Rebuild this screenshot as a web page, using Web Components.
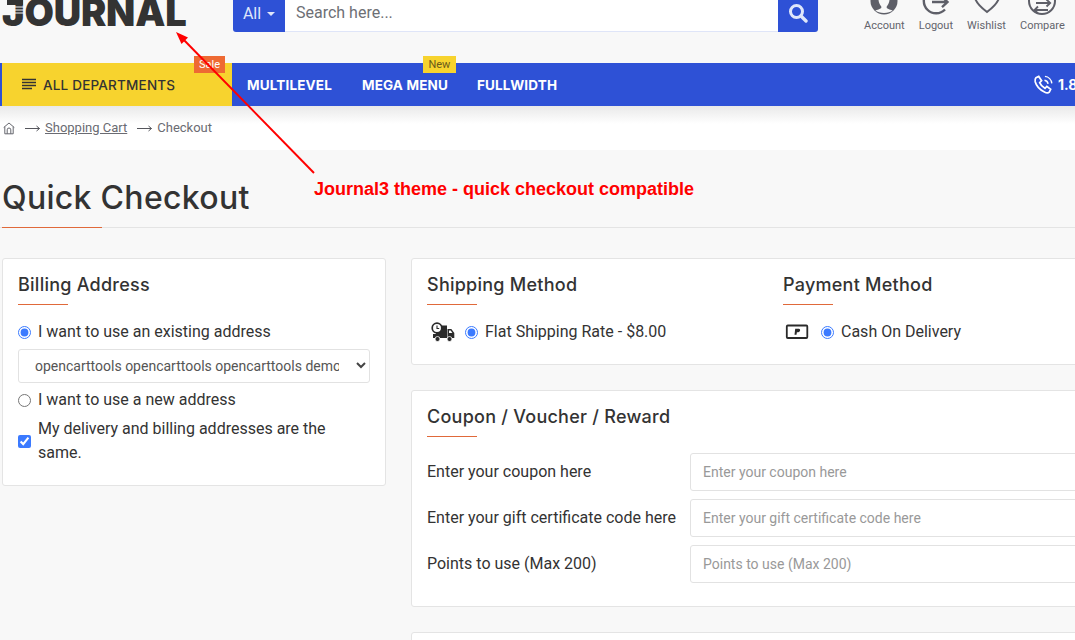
<!DOCTYPE html>
<html><head><meta charset="utf-8">
<style>
html,body{margin:0;padding:0;height:640px;width:1075px;overflow:hidden;background:#f8f8f8}
body{font:16px/24px Roboto,sans-serif;color:#333}
</style></head><body>
<x-page></x-page>

<template id="t-page">
<style>
:host{display:block;width:1200px;position:relative;height:640px;overflow:hidden}
.cols{display:grid;grid-template-columns:384px 746px;gap:25px;padding:30px 0 0 2px;align-items:start}
.right{display:flex;flex-direction:column;gap:25px}
.two{display:grid;grid-template-columns:356px 1fr}
.opt{display:flex;align-items:center;height:24px;margin-top:15px}
.opt svg{flex:none}
.note{position:absolute;z-index:4;left:314px;top:178px;font:bold 18px/22px "Liberation Sans",sans-serif;color:#f00;white-space:nowrap}
.arrow{position:absolute;z-index:4;left:0;top:0;pointer-events:none}
</style>
<x-header></x-header>
<x-nav></x-nav>
<x-crumbs></x-crumbs>
<x-title>Quick Checkout</x-title>
<div class="cols">
  <x-card heading="Billing Address">
    <x-choice type="radio" name="a" checked top="15">I want to use an existing address</x-choice>
    <x-select>opencarttools opencarttools opencarttools demo demo, Texas, United States</x-select>
    <x-choice type="radio" name="a" top="5">I want to use a new address</x-choice>
    <x-choice type="checkbox" checked top="5">My delivery and billing addresses are the same.</x-choice>
  </x-card>
  <div class="right">
    <x-card>
      <div class="two">
        <div><x-heading>Shipping Method</x-heading>
          <div class="opt">
            <svg width="24" height="20" viewBox="0 0 24 20" style="margin:0 10px 0 4px"><rect x="5" y="3.500" width="11" height="12.500" fill="#2a2a2a"/><rect x="2" y="12" width="14" height="4" fill="#2a2a2a"/><circle cx="6" cy="6" r="4.800" fill="#fff" stroke="#2a2a2a" stroke-width="1.700"/><path d="M6 3.500V6.500h2.200" fill="none" stroke="#2a2a2a" stroke-width="1.100"/><path d="M16.500 7h3.800l3 4v5h-6.800z" fill="#2a2a2a"/><path d="M18 8.500h1.700l1.700 2.500H18z" fill="#fff"/><circle cx="6.500" cy="17" r="2.500" fill="#2a2a2a" stroke="#fff" stroke-width=".8"/><circle cx="18.500" cy="17" r="2.500" fill="#2a2a2a" stroke="#fff" stroke-width=".8"/></svg>
            <x-choice type="radio" name="s" checked>Flat Shipping Rate - $8.00</x-choice>
          </div>
        </div>
        <div><x-heading>Payment Method</x-heading>
          <div class="opt">
            <svg width="24" height="16" viewBox="0 0 24 16" style="margin:0 12px 0 2px"><rect x="1.800" y="1.500" width="20.500" height="12.500" rx="1" fill="#fff" stroke="#2a2a2a" stroke-width="1.800"/><path d="M10.200 4.800h3.700c1.700 0 1.800 3.300-.7 3.400h-1.300l-.4 2.500h-2z" fill="#2a2a2a"/></svg>
            <x-choice type="radio" name="p" checked>Cash On Delivery</x-choice>
          </div>
        </div>
      </div>
    </x-card>
    <x-card heading="Coupon / Voucher / Reward" style="padding-bottom:15px">
      <div style="height:16px"></div>
      <x-field>Enter your coupon here</x-field>
      <x-field>Enter your gift certificate code here</x-field>
      <x-field>Points to use (Max 200)</x-field>
    </x-card>
    <x-card style="height:100px"></x-card>
  </div>
</div>
<svg class="arrow" width="400" height="200" viewBox="0 0 400 200"><path d="M314 173L181 37" stroke="#f00" stroke-width="2" fill="none"/><path d="M176 32L188 37.500 181.500 44z" fill="#f00"/></svg>
<div class="note">Journal3 theme - quick checkout compatible</div>
</template>

<template id="t-header">
<style>
:host{display:flex;align-items:flex-end;height:32px;padding-bottom:31px;overflow:hidden}
.logo{width:233px;flex:none;box-sizing:border-box;padding-left:2px;height:40px;position:relative;font:900 38px/41px Inter,sans-serif;color:#333;letter-spacing:-.2px;white-space:nowrap}
.logo svg{position:absolute;left:6px;top:8px}
.search{display:flex;width:585px;height:38px;flex:none;border-radius:0 0 3px 3px;overflow:hidden}
.all{background:#2e51d6;color:#dfe6fa;width:52px;box-sizing:border-box;display:flex;align-items:center;justify-content:center;gap:6px;font:16px Roboto,sans-serif}
.all i{width:0;height:0;border:4px solid transparent;border-top-color:#dfe6fa;border-bottom:0;margin-top:2px}
.q{flex:1;background:#fff;color:#6d6f75;font:16px/38px Roboto,sans-serif;padding-left:11px;box-shadow:inset 0 -1px 0 #dfe5f8}
.btn{width:40px;background:#2e51d6;display:flex;align-items:center;justify-content:center}
.tools{display:flex;gap:14px;margin-left:46px;font:11px/14px Roboto,sans-serif;color:#63646c}
.tool{display:flex;flex-direction:column;align-items:center;height:32px;justify-content:flex-end}
.tool svg{display:block;margin-bottom:4px;flex:none}
.tool span{margin-bottom:-1px;height:14px;flex:none}
</style>
<div class="logo">JOURNAL<svg width="18" height="16" viewBox="0 0 18 16"><rect x="1" y="0" width="16" height="5" fill="#333"/><path d="M7 7h11M7 10h11M7 13h11" stroke="#f8f8f8" stroke-width="1"/></svg></div>
<div class="search">
  <div class="all"><span>All</span><i></i></div>
  <div class="q"><span>Search here...</span></div>
  <div class="btn"><svg width="20" height="20" viewBox="0 0 20 20"><circle cx="8.500" cy="8.500" r="6" fill="none" stroke="#dfe6fa" stroke-width="3"/><path d="M13 13l5 5" stroke="#dfe6fa" stroke-width="3.400" stroke-linecap="round"/></svg></div>
</div>
<div class="tools">
  <div class="tool"><svg width="28" height="28" viewBox="0 0 28 28"><circle cx="14" cy="14" r="13.500" fill="#5e5f68"/><path d="M14 6c4 0 6 3 5.500 7-.3 3-1.500 5-2.800 6.500V21c1.500 1.300 4 1.800 6 2.500-2 1.500-5 2.500-8.700 2.500s-6.700-1-8.700-2.500c2-.7 4.500-1.200 6-2.500v-1.500c-1.300-1.500-2.500-3.500-2.800-6.500C8 9 10 6 14 6z" fill="#f8f8f8"/></svg><span>Account</span></div>
  <div class="tool"><svg width="28" height="28" viewBox="0 0 28 28" fill="none" stroke="#5e5f68"><path d="M23 22.500A12.300 12.300 0 1 1 23 5.500" stroke-width="2.400"/><path d="M10 15h15.500M20 9.800l5.500 5.200-5.500 5.200" stroke-width="2.400"/></svg><span>Logout</span></div>
  <div class="tool" style="min-width:39px"><svg width="28" height="28" viewBox="0 0 28 28" style="margin-bottom:5px"><path d="M14 26C8 21.500 1.500 16 1.500 9 1.500 4.500 5 1.500 8.500 1.500c2.300 0 4.200 1 5.500 3 1.300-2 3.200-3 5.500-3 3.500 0 7 3 7 7.500 0 7-6.500 12.500-12.500 17z" fill="none" stroke="#5e5f68" stroke-width="2"/></svg><span>Wishlist</span></div>
  <div class="tool"><svg width="28" height="28" viewBox="0 0 28 28" fill="none" stroke="#5e5f68"><circle cx="14" cy="14" r="13" stroke-width="2"/><path d="M8 16h14M18.500 12.500l3.700 3.500-3.700 3.500M20 23H6.500M10 19.500l-3.500 3.500 3.500 3.500" stroke-width="1.800"/></svg><span>Compare</span></div>
</div>
</template>

<template id="t-nav">
<style>
:host{display:flex;height:43px;background:#2e51d6;padding-left:2px;align-items:stretch;white-space:nowrap;position:relative;z-index:2}
.dept{width:230px;flex:none;box-sizing:border-box;background:#f7d32e;display:flex;align-items:center;padding-left:19px;gap:6px;font:500 13.500px Inter,sans-serif;color:#333;position:relative;letter-spacing:.2px}
.items{display:flex;align-items:center;padding-left:15px;color:#fff;font:700 13.500px Inter,sans-serif;letter-spacing:.15px}
.item{position:relative;margin-right:30px}
.item:nth-child(2){margin-right:29px}
.badge{position:absolute;height:17px;font:11px/17px Roboto,sans-serif;text-align:center;letter-spacing:0}
.sale{top:-7px;right:7px;width:31px;background:#ee6a33;color:#fff}
.new{left:61px;width:33px;background:#f7d32e;color:#6a5a1a;top:-21px}
.phone{position:absolute;left:1033px;top:0;height:43px;display:flex;align-items:center;gap:4px;color:#fff;font:700 14px Inter,sans-serif}
</style>
<div class="dept"><svg width="16" height="14" viewBox="0 0 16 14" stroke="#333" stroke-width="1.500"><path d="M1 1.500h14M1 4.500h14M1 7.500h14M1 10.500h10"/></svg>ALL DEPARTMENTS<div class="badge sale">Sale</div></div>
<div class="items">
  <div class="item">MULTILEVEL</div>
  <div class="item">MEGA MENU<div class="badge new">New</div></div>
  <div class="item">FULLWIDTH</div>
</div>
<div class="phone"><svg width="21" height="22" viewBox="0 0 22 22" fill="none" stroke="#fff" stroke-width="1.800"><path d="M3 3.500l3-1.500 3 4.500-2 2c1 2.500 3 4.500 5.500 6l2-2 4 3-1.500 3c-1 1-3 1-5-.2C7.500 16 3.500 12 2.300 7.500 2 6 2.200 4.500 3 3.500z"/><path d="M12 6c2 .3 3.500 1.800 3.800 3.800M12.500 2c3.800.4 6.800 3.500 7.200 7.300" stroke-width="1.500"/></svg><span>1.800.555.8888</span></div>
</template>

<template id="t-crumbs">
<style>
:host{display:flex;align-items:center;height:44px;background:linear-gradient(#e9e9e9,#fff 18px);padding-left:3px;font:13px/16px Roboto,sans-serif;color:#6a6b72}
a{color:inherit;text-decoration:underline}
svg{display:block}
.ar{margin:0 5px 0 10px}
.row{display:flex;align-items:center}
</style>
<div class="row">
<svg width="12" height="13" viewBox="0 0 12 13" fill="none" stroke="#66676e" stroke-width="1"><path d="M.7 5.500L6 1l5.300 4.500M1.800 4.800v7h8.400v-7M4.200 11.800V7.800a1.800 1.800 0 0 1 3.600 0v4"/></svg>
<svg class="ar" width="15" height="7" viewBox="0 0 15 7" fill="none" stroke="#55565c"><path d="M0 3.500h14.500M11.500 1l3 2.500-3 2.500"/></svg>
<a>Shopping Cart</a>
<svg class="ar" width="15" height="7" viewBox="0 0 15 7" fill="none" stroke="#55565c"><path d="M0 3.500h14.500M11.500 1l3 2.500-3 2.500"/></svg>
<span>Checkout</span>
</div>
</template>

<template id="t-title">
<style>
:host{display:block;height:78px;box-sizing:border-box;border-bottom:1px solid #e4e4e4;position:relative;padding:29px 0 0 2px;font:500 32px/38px Inter,sans-serif;color:#333;letter-spacing:.3px}
:host::after{content:"";position:absolute;left:2px;bottom:-1px;width:100px;height:1px;background:#e0693a}
</style><slot></slot>
</template>

<template id="t-card">
<style>
:host{display:block;background:#fff;border:1px solid #e4e4e4;border-radius:3px;padding:14px 15px 20px;box-sizing:border-box}
</style>
<slot name="h"></slot><slot></slot>
</template>

<template id="t-heading">
<style>
:host{display:block;font:500 18px/24px Inter,sans-serif;color:#333;padding-bottom:8px;position:relative;height:24px;letter-spacing:.25px}
:host::after{content:"";position:absolute;left:0;bottom:0;width:50px;height:1px;background:#e0693a}
</style><slot></slot>
</template>

<template id="t-choice">
<style>
:host{display:block}
label{display:flex;align-items:center;gap:7px;line-height:24px;color:#333}
input{margin:0;flex:none;width:13px;height:13px;accent-color:#3b7aff}
</style>
<label><input><span><slot></slot></span></label>
</template>

<template id="t-select">
<style>
:host{display:block;margin-top:5px;position:relative}
select{display:block;appearance:none;width:100%;height:34px;box-sizing:border-box;border:1px solid #e2e2e2;border-radius:3px;background:#fff;color:#555;font:14px Roboto,sans-serif;padding:0 30px 0 16px;outline:0}
svg{position:absolute;right:4px;top:13px;pointer-events:none}
</style>
<select><option></option></select>
<svg width="10" height="7" viewBox="0 0 10 7" fill="none" stroke="#444" stroke-width="2"><path d="M1 1l4 4 4-4"/></svg>
</template>

<template id="t-field">
<style>
:host{display:grid;grid-template-columns:263px 1fr;align-items:center;margin-bottom:8px}
input{height:38px;box-sizing:border-box;width:100%;border:1px solid #e2e2e2;border-radius:3px;background:#fff;font:14px Roboto,sans-serif;padding:0 12px;outline:0}
input::placeholder{color:#999;opacity:1}
span{color:#333}
</style>
<span><slot></slot></span><input>
</template>

<script>
function def(name,tid,init){
  customElements.define(name,class extends HTMLElement{
    constructor(){super();const r=this.attachShadow({mode:'open'});r.appendChild(document.getElementById(tid).content.cloneNode(true));}
    connectedCallback(){if(init)init(this,this.shadowRoot);}
  });
}
def('x-heading','t-heading');
def('x-header','t-header');
def('x-nav','t-nav');
def('x-crumbs','t-crumbs');
def('x-title','t-title');
def('x-card','t-card',(h,r)=>{
  const t=h.getAttribute('heading');
  if(t&&!h.querySelector('x-heading')){const e=document.createElement('x-heading');e.slot='h';e.textContent=t;h.prepend(e);}
});
def('x-choice','t-choice',(h,r)=>{
  const i=r.querySelector('input');
  i.type=h.getAttribute('type');
  if(h.getAttribute('name'))i.name=h.getAttribute('name');
  if(h.hasAttribute('checked'))i.checked=true;
  if(h.getAttribute('top'))h.style.marginTop=h.getAttribute('top')+'px';
});
def('x-select','t-select',(h,r)=>{r.querySelector('option').textContent=h.textContent;});
def('x-field','t-field',(h,r)=>{r.querySelector('input').placeholder=h.textContent;});
def('x-page','t-page');
</script>
</body></html>
